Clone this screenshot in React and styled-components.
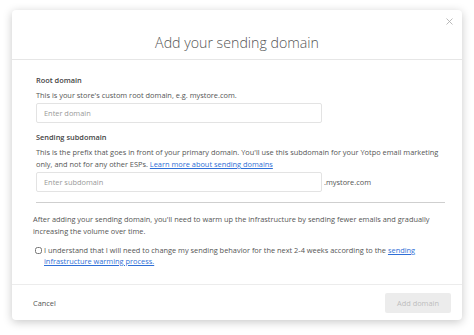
import React from "react";
import styled, { createGlobalStyle } from "styled-components";

const Global = createGlobalStyle`
  body {
    margin: 0;
    background: #ffffff;
    font-family: "Open Sans", "Liberation Sans", sans-serif;
  }
`;

const Page = styled.div`
  width: 474px;
  height: 335px;
  padding: 10px 12px 0 12px;
  box-sizing: border-box;
`;

const Modal = styled.div`
  position: relative;
  width: 450px;
  height: 310px;
  background: #fff;
  border-radius: 4px;
  box-shadow: 0 2px 10px rgba(0, 0, 0, 0.22);
  display: flex;
  flex-direction: column;
  box-sizing: border-box;
`;

const Header = styled.div`
  height: 50px;
  border-bottom: 1px solid #e6e6e6;
  display: flex;
  align-items: center;
  justify-content: center;
  padding-top: 16px;
  box-sizing: border-box;
`;

const Title = styled.h1`
  margin: 0;
  font-size: 14.2px;
  font-weight: 300;
  color: #555;
`;

const Close = styled.button`
  position: absolute;
  top: 8px;
  right: 9px;
  border: 0;
  background: none;
  padding: 0;
  width: 7px;
  height: 7px;
  display: flex;
  cursor: pointer;
`;

const Body = styled.div`
  flex: 1;
  padding: 15px 17px 0 21px;
  display: flex;
  flex-direction: column;
`;

const Label = styled.div`
  font-size: 7.4px;
  font-weight: 600;
  color: #444;
  margin-bottom: 4px;
  margin-left: 3px;
`;

const Help = styled.div`
  font-size: 7.4px;
  line-height: 12px;
  color: #555;
  margin-left: 3px;
  margin-bottom: 2px;
`;

const Link = styled.a`
  color: #2f6fd6;
  text-decoration: underline;
`;

const Row = styled.div`
  display: flex;
  align-items: center;
  margin-left: 3px;
  margin-bottom: ${(p) => p.mb || 0}px;
`;

const Input = styled.input`
  width: 286px;
  height: 20px;
  box-sizing: border-box;
  border: 1px solid #e3e3e3;
  border-radius: 2px;
  padding: 0 7px;
  font-family: inherit;
  font-size: 7.4px;
  color: #444;
  outline: none;
  &::placeholder {
    color: #999;
  }
`;

const Suffix = styled.span`
  font-size: 7.4px;
  color: #555;
  margin-left: 2px;
`;

const Divider = styled.hr`
  border: 0;
  border-top: 1px solid #cfcfcf;
  margin: 10px 0 11px 3px;
`;

const Note = styled.p`
  margin: 0 0 8px 0;
  font-size: 7.4px;
  line-height: 11.5px;
  color: #555;
`;

const Check = styled.label`
  display: flex;
  align-items: flex-start;
  font-size: 7.4px;
  line-height: 10.5px;
  color: #555;
  margin-left: 2px;
  input {
    margin: 1.5px 2px 0 0;
    width: 7px;
    height: 7px;
    flex: none;
  }
`;

const Footer = styled.div`
  height: 35px;
  border-top: 1px solid #ececec;
  display: flex;
  align-items: center;
  justify-content: space-between;
  padding: 0 11px 0 21px;
`;

const Cancel = styled.button`
  border: 0;
  background: none;
  padding: 0;
  font-family: inherit;
  font-size: 7.4px;
  color: #555;
  cursor: pointer;
`;

const Primary = styled.button`
  width: 66px;
  height: 20px;
  border: 0;
  border-radius: 2px;
  background: #ececec;
  color: #bdbdbd;
  font-family: inherit;
  font-size: 7.4px;
`;

export default function App() {
  return (
    <Page>
      <Global />
      <Modal>
        <Close aria-label="Close">
          <svg width="7" height="7" viewBox="0 0 7 7">
            <path d="M0.5 0.5L6.5 6.5M6.5 0.5L0.5 6.5" stroke="#aaa" strokeWidth="0.8" />
          </svg>
        </Close>
        <Header>
          <Title>Add your sending domain</Title>
        </Header>
        <Body>
          <Label>Root domain</Label>
          <Help>This is your store's custom root domain, e.g. mystore.com.</Help>
          <Row mb={9}>
            <Input placeholder="Enter domain" />
          </Row>
          <Label>Sending subdomain</Label>
          <Help>
            This is the prefix that goes in front of your primary domain. You'll use this subdomain for your Yotpo email marketing
            only, and not for any other ESPs. <Link href="#">Learn more about sending domains</Link>
          </Help>
          <Row>
            <Input placeholder="Enter subdomain" />
            <Suffix>.mystore.com</Suffix>
          </Row>
          <Divider />
          <Note>
            After adding your sending domain, you'll need to warm up the infrastructure by sending fewer emails and gradually
            increasing the volume over time.
          </Note>
          <Check>
            <input type="checkbox" />
            <span>
              I understand that I will need to change my sending behavior for the next 2-4 weeks according to the{" "}
              <Link href="#">sending infrastructure warming process.</Link>
            </span>
          </Check>
        </Body>
        <Footer>
          <Cancel>Cancel</Cancel>
          <Primary disabled>Add domain</Primary>
        </Footer>
      </Modal>
    </Page>
  );
}
